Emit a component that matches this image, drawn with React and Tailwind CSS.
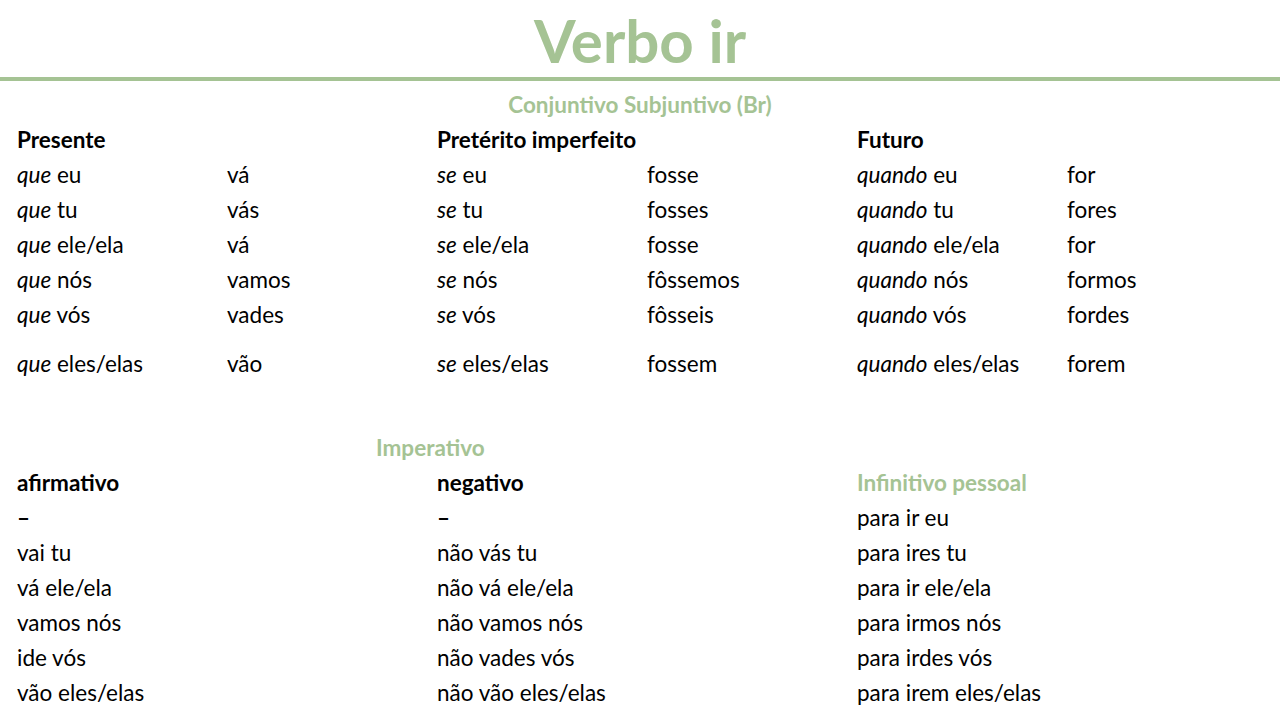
const green = 'text-[#a5c394]';

const subjuntivo = [
  { title: 'Presente', pre: 'que', rows: [['eu', 'vá'], ['tu', 'vás'], ['ele/ela', 'vá'], ['nós', 'vamos'], ['vós', 'vades'], ['eles/elas', 'vão']] },
  { title: 'Pretérito imperfeito', pre: 'se', rows: [['eu', 'fosse'], ['tu', 'fosses'], ['ele/ela', 'fosse'], ['nós', 'fôssemos'], ['vós', 'fôsseis'], ['eles/elas', 'fossem']] },
  { title: 'Futuro', pre: 'quando', rows: [['eu', 'for'], ['tu', 'fores'], ['ele/ela', 'for'], ['nós', 'formos'], ['vós', 'fordes'], ['eles/elas', 'forem']] },
];

const afirmativo = ['–', 'vai tu', 'vá ele/ela', 'vamos nós', 'ide vós', 'vão eles/elas'];
const negativo = ['–', 'não vás tu', 'não vá ele/ela', 'não vamos nós', 'não vades vós', 'não vão eles/elas'];
const infinitivo = ['para ir eu', 'para ires tu', 'para ir ele/ela', 'para irmos nós', 'para irdes vós', 'para irem eles/elas'];

function Row({ children, className = '' }) {
  return <div className={`grid grid-cols-[repeat(6,210px)] h-[35px] leading-[35px] ${className}`}>{children}</div>;
}

export default function App() {
  return (
    <div className="w-[1280px] h-[720px] bg-white overflow-hidden text-black text-[22.5px]" style={{ fontFamily: 'Lato, "Open Sans", sans-serif' }}>
      <div className={`h-[76px] leading-[80px] text-center text-[60px] font-bold ${green}`}>Verbo ir</div>
      <div className="h-[4px] bg-[#a5c394] mt-[1px]" />
      <div className={`mt-[6px] h-[35px] leading-[35px] text-center font-bold ${green}`}>Conjuntivo Subjuntivo (Br)</div>

      <div className="pl-[17px]">
        <Row className="font-bold">
          {subjuntivo.map((s) => (
            <div key={s.title} className="col-span-2">{s.title}</div>
          ))}
        </Row>
        {[0, 1, 2, 3, 4, 5].map((i) => (
          <Row key={i} className={i === 5 ? 'mt-[14px]' : ''}>
            {subjuntivo.map((s) => [
              <div key={s.title + 'a'}><i>{s.pre}</i> {s.rows[i][0]}</div>,
              <div key={s.title + 'b'}>{s.rows[i][1]}</div>,
            ])}
          </Row>
        ))}
      </div>

      <div className={`mt-[49px] h-[35px] leading-[35px] pl-[376px] font-bold ${green}`}>Imperativo</div>
      <div className="pl-[17px]">
        <Row className="font-bold">
          <div className="col-span-2">afirmativo</div>
          <div className="col-span-2">negativo</div>
          <div className={`col-span-2 ${green}`}>Infinitivo pessoal</div>
        </Row>
        {[0, 1, 2, 3, 4, 5].map((i) => (
          <Row key={i}>
            <div className={`col-span-2 ${i === 0 ? 'font-bold' : ''}`}>{afirmativo[i]}</div>
            <div className={`col-span-2 ${i === 0 ? 'font-bold' : ''}`}>{negativo[i]}</div>
            <div className="col-span-2">{infinitivo[i]}</div>
          </Row>
        ))}
      </div>
    </div>
  );
}
